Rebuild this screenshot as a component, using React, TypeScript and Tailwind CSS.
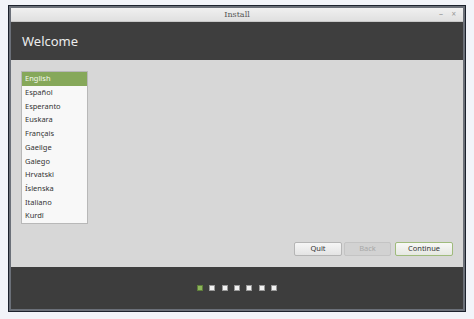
import React from "react";

const langs = ["English","Español","Esperanto","Euskara","Français","Gaeilge","Galego","Hrvatski","Íslenska","Italiano","Kurdî"];

export default function App() {
  return (
    <div className="w-[474px] h-[319px] bg-[#f2f4f9] relative overflow-hidden" style={{fontFamily: '"Noto Sans", "Open Sans", sans-serif'}}>
      <div className="absolute left-[8px] top-[5px] w-[458px] h-[307px] bg-[#1c222d] p-[1px]">
        <div className="w-full h-full bg-[#6b7079] px-[2px] pt-[2px] pb-[2px] flex flex-col">
          <div className="flex flex-col w-full h-full">
            {/* title bar */}
            <div className="h-[14px] bg-gradient-to-b from-[#f0f0f0] to-[#e0e0e0] border-b border-[#c8c8c8] flex items-center justify-center relative">
              <span className="text-[8px] leading-none text-[#555]" style={{fontFamily: '"DejaVu Serif", serif'}}>Install</span>
              <span className="absolute right-[20px] top-[2px] text-[8px] leading-none text-[#9a9a9a]">–</span>
              <span className="absolute right-[7px] top-[2px] text-[8px] leading-none text-[#9a9a9a]">×</span>
            </div>
            {/* header */}
            <div className="h-[38px] bg-[#3e3e3e] flex items-center pl-[11px]">
              <span className="text-[13px] leading-none text-[#ececec]">Welcome</span>
            </div>
            {/* content */}
            <div className="h-[207px] bg-[#d7d7d7] flex flex-col pl-[10px] pr-[10px] pt-[11px] pb-[11px]">
              <div className="w-[67px] h-[153px] bg-[#f8f8f8] border border-[#b8b8b8] flex flex-col">
                {langs.map((l, i) => (
                  <div key={l} className={`h-[13.8px] flex items-center pl-[3px] text-[7.5px] leading-none ${i === 0 ? "bg-[#86a85a] text-[#f4f8ee]" : "text-[#333]"}`}>{l}</div>
                ))}
              </div>
              <div className="flex-1" />
              <div className="flex justify-end items-end">
                <div className="w-[48px] h-[14px] rounded-[2px] border border-[#b5b5b5] bg-gradient-to-b from-[#f6f6f6] to-[#e4e4e4] flex items-center justify-center text-[7.5px] text-[#333]">Quit</div>
                <div className="ml-[2px] w-[47px] h-[14px] rounded-[2px] border border-[#c4c4c4] bg-[#d2d2d2] flex items-center justify-center text-[7.5px] text-[#a8a8a8]">Back</div>
                <div className="ml-[4px] w-[58px] h-[14px] rounded-[2px] border border-[#9fbb7c] bg-gradient-to-b from-[#f8f8f6] to-[#e6e8e2] flex items-center justify-center text-[7.5px] text-[#333]">Continue</div>
              </div>
            </div>
            {/* footer */}
            <div className="flex-1 bg-[#3d3d3d] flex items-center justify-center gap-[6.3px] pt-[0px]">
              {[0,1,2,3,4,5,6].map(i => (
                <div key={i} className={`w-[6px] h-[6px] ${i === 0 ? "bg-[#8db65b] border border-[#5e7d3a]" : "bg-[#f2f2f2] border border-[#9a9a9a]"}`} />
              ))}
            </div>
          </div>
        </div>
      </div>
    </div>
  );
}
